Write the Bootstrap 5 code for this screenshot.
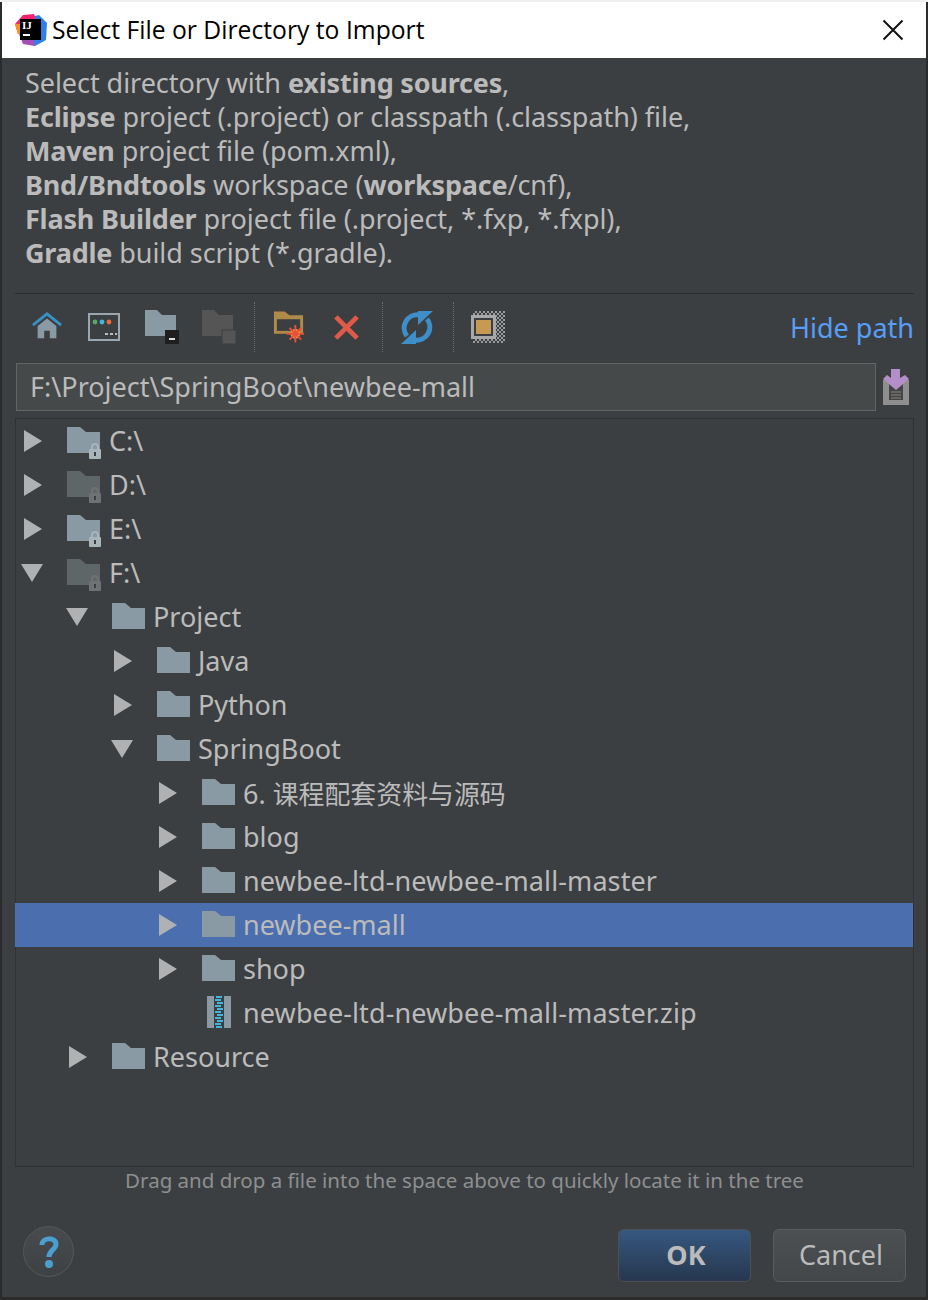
<!DOCTYPE html>
<html lang="en">
<head>
  <meta charset="UTF-8">
  <title>Select File or Directory to Import</title>
  <link href="https://cdn.jsdelivr.net/npm/bootstrap@5.3.0/dist/css/bootstrap.min.css" rel="stylesheet">
  <style>
    html, body { height: 1300px; overflow: hidden; }
    body { background: #f0f0f0; font-family: "Noto Sans", "Noto Sans CJK SC", sans-serif; color: #bbb; padding-top: 2px; }
    .dlg { height: 1298px; border-left: 2px solid #2b2b2b; border-right: 2px solid #2b2b2b; background: #3c3f41; }
    .title-bar { height: 56px; background: #fff; color: #000; font-family: "Open Sans", sans-serif; font-size: 24.7px; padding-left: 13px; flex: none; }
    .title-bar .logo { margin-right: 5px; }
    .title-bar .x-btn { margin-left: auto; margin-right: 22px; }
    .dlg-body { flex: 1; padding: 8px 12px 0 13px; border-bottom: 3px solid #2b2b2b; }
    .descr { font-size: 27px; line-height: 34px; padding-left: 10px; height: 227px; margin: 0; color: #bbb; letter-spacing: -.05px; }
    .descr b { font-weight: 700; letter-spacing: -.2px; }
    .tools { height: 70px; border-top: 1px solid #2b2b2b; padding: 0 0 3px 17px; }
    .tool-sep { width: 0; height: 50px; border-left: 1px dotted #6a6d6f; margin-right: 18px; }
    .g17 { margin-right: 17px; } .g18 { margin-right: 18px; } .g20 { margin-right: 20px; } .g22 { margin-right: 22px; }
    .g23 { margin-right: 23px; } .g25 { margin-right: 25px; } .g26 { margin-right: 26px; } .g27 { margin-right: 27px; }
    .tool-sep.g17 { margin-right: 17px; }
    .hide-link { margin-left: auto; margin-top: 3px; font-size: 27px; color: #589df6; text-decoration: none; }
    .path-row { height: 48px; margin-bottom: 7px; }
    .path-box { width: 860px; margin-left: 1px; height: 48px; background: #45494a; border: 1px solid #646464; font-size: 27px; line-height: 46px; padding-left: 13px; }
    .import-ic { margin: 6px 0 0 7px; }
    .tree-box { height: 749px; border: 1px solid #323232; }
    .tree-row { height: 44px; font-size: 27px; line-height: 44px; white-space: nowrap; }
    .tree-row.sel { background: #4b6eaf; margin-left: -1px; padding-left: 143px; }
    .tree-row.long { letter-spacing: .1px; }
    .d0 { padding-left: 7px; } .d1 { padding-left: 52px; } .d2 { padding-left: 97px; } .d3 { padding-left: 142px; }
    .tw { width: 36px; flex: none; }
    .fld { width: 41px; flex: none; margin: -2px 0 0 8px; }
    .d0 .fld { width: 41px; margin-right: 1px; }
    .cjk { font-family: "Noto Sans CJK SC", sans-serif; font-size: 25.9px; margin-top: 1px; }
    .hint { text-align: center; font-size: 20.5px; color: #8d8f90; height: 62px; line-height: 26px; }
    .foot { padding: 0 8px; }
    .help-btn { width: 51px; height: 51px; margin-top: -3px; border-radius: 50%; border: 1px solid #55585a; background: linear-gradient(#474b4d, #3e4244); }
    .act-btn { width: 133px; height: 53px; border-radius: 6px; font-size: 27px; padding: 0 0 2px 3px; line-height: 47px; border: 1px solid #5a5d5f; background: linear-gradient(#4c5052, #43474a); color: #bbb; }
    .act-btn.pri { background: linear-gradient(#365880, #26374e); font-weight: 700; border-color: #4c5052; margin-right: 22px; color: #bbb; }
  </style>
</head>
<body>
  <svg width="0" height="0" class="position-absolute">
    <symbol id="arr-r" viewBox="0 0 20 22"><path d="M1 0 19 11 1 22z" fill="#afb1b3"/></symbol>
    <symbol id="arr-d" viewBox="0 0 22 20"><path d="M0 1h22L11 19z" fill="#afb1b3"/></symbol>
    <symbol id="folder" viewBox="0 0 33 26"><path d="M0 0h13l6 5h14v21H0z" fill="currentColor"/></symbol>
    <symbol id="lock" viewBox="0 0 12 16"><path d="M3 7V4a3 3 0 0 1 6 0v3" fill="none" stroke="currentColor" stroke-width="2"/><rect x="0" y="6" width="12" height="10" rx="1" fill="currentColor"/><rect x="5" y="9" width="2" height="4" fill="#3c3f41"/></symbol>
  </svg>
  <div class="dlg d-flex flex-column">
    <div class="title-bar d-flex align-items-center">
      <svg class="logo" width="32" height="32" viewBox="0 0 32 32">
        <path d="M12 4 24 1 32 9 31 26 20 32 8 28z" fill="#2f7fe6"/>
        <path d="M0 10 8 1 19 0 22 8 8 20 3 20z" fill="#f0246f"/>
        <path d="M0 10 3 20 8 22 8 10z" fill="#f7941d"/>
        <path d="M4 20 8 30 20 32 18 24z" fill="#a64db6"/>
        <rect x="5" y="5" width="21" height="21" fill="#000"/>
        <text x="7" y="15" font-size="11" font-weight="700" fill="#fff" font-family="Liberation Serif">IJ</text>
        <rect x="8" y="20" width="7" height="2" fill="#fff"/>
      </svg>
      <span>Select File or Directory to Import</span>
      <svg class="x-btn" width="22" height="22" viewBox="0 0 22 22"><path d="M1.5 1.5 20.5 20.5M20.5 1.5 1.5 20.5" stroke="#111" stroke-width="2"/></svg>
    </div>
    <div class="dlg-body d-flex flex-column">
      <p class="descr">Select directory with <b>existing sources</b>,<br><b>Eclipse</b> project (.project) or classpath (.classpath) file,<br><b>Maven</b> project file (pom.xml),<br><b>Bnd/Bndtools</b> workspace (<b>workspace</b>/cnf),<br><b>Flash Builder</b> project file (.project, *.fxp, *.fxpl),<br><b>Gradle</b> build script (*.gradle).</p>
      <div class="tools d-flex align-items-center">
        <svg class="g26" width="30" height="30" viewBox="0 0 32 32"><path d="M1 14 16 2 31 14" fill="none" stroke="#3592c4" stroke-width="3"/><path d="M6 15 16 7 26 15V28H19V20H13V28H6z" fill="#8a9aa5"/></svg>
        <svg class="g25" width="32" height="28" viewBox="0 0 32 28"><rect x="1" y="1" width="30" height="26" fill="#3c3f41" stroke="#9aa7b0" stroke-width="2"/><circle cx="7" cy="9" r="2.4" fill="#59a869"/><circle cx="14" cy="9" r="2.4" fill="#40b6e0"/><circle cx="21" cy="9" r="2.4" fill="#ed6a3a"/><path d="M17 21h3m2 0h3m2 0h2" stroke="#bbb" stroke-width="2"/></svg>
        <svg class="g23" width="34" height="34" viewBox="0 0 34 34"><path d="M0 0h12l5 5h14v21H0z" fill="#8a9aa5"/><rect x="20" y="20" width="14" height="14" fill="#1f1f1f"/><rect x="24" y="28" width="6" height="2" fill="#ddd"/></svg>
        <svg class="g18" width="34" height="34" viewBox="0 0 34 34"><path d="M0 0h12l5 5h14v21H0z" fill="#555"/><rect x="20" y="20" width="14" height="14" fill="#555" stroke="#3c3f41" stroke-width="1"/></svg>
        <div class="tool-sep"></div>
        <svg class="g27" width="33" height="34" viewBox="0 0 34 34"><path d="M1 1h11l5 4h14v19H1z" fill="#b08a48"/><path d="M4 9h24v12H4z" fill="#3c3f41"/><circle cx="23" cy="24" r="5" fill="#f2a14a"/><path d="M23 15v18M14 24h18M17 18l12 12M29 18 17 30" stroke="#e8503a" stroke-width="2"/></svg>
        <svg class="g22" width="27" height="27" viewBox="0 0 28 28"><path d="M3 3 25 25M25 3 3 25" stroke="#e05a4a" stroke-width="5"/></svg>
        <div class="tool-sep"></div>
        <svg class="g20" width="32" height="33" viewBox="0 0 32 33">
          <path d="M18 4A13 13 0 0 0 6 25M14 29A13 13 0 0 0 26 8" fill="none" stroke="#3d8ec9" stroke-width="5"/>
          <path d="M0 33H15V19z" fill="#3d8ec9"/><path d="M32 0H17V14z" fill="#3d8ec9"/>
        </svg>
        <div class="tool-sep g17"></div>
        <svg width="34" height="32" viewBox="0 0 34 32"><defs><pattern id="chk" width="4" height="4" patternUnits="userSpaceOnUse"><rect width="2" height="2" fill="#9a9a9a"/><rect x="2" y="2" width="2" height="2" fill="#9a9a9a"/></pattern></defs><rect x="2" y="0" width="32" height="32" fill="url(#chk)"/><rect x="1.5" y="5.5" width="22" height="21" fill="#3c3f41" stroke="#a8a8a8" stroke-width="3"/><rect x="5" y="9" width="15" height="14" fill="#c69a55"/></svg>
        <a href="#" class="hide-link">Hide path</a>
      </div>
      <div class="path-row d-flex">
        <div class="path-box">F:\Project\SpringBoot\newbee-mall</div>
        <svg class="import-ic" width="26" height="36" viewBox="0 0 26 36"><path d="M0 11h26v25H0z" fill="#8f8f8f"/><rect x="6" y="14" width="14" height="17" fill="#444"/><path d="M8 23h10M8 26h10M8 29h10" stroke="#888"/><path d="M8 0h9v9l5-3 4 4-13 11L0 10l4-4 4 3z" fill="#b48ec8"/></svg>
      </div>
      <div class="tree-box" id="tree"></div>
      <div class="hint">Drag and drop a file into the space above to quickly locate it in the tree</div>
      <div class="foot d-flex align-items-start">
        <button class="help-btn d-flex align-items-center justify-content-center p-0">
          <svg width="20" height="32" viewBox="0 0 20 32"><path d="M3 9C3 1 17 1 17 8c0 6-7 6-7 13" fill="none" stroke="#4a9fd0" stroke-width="5"/><circle cx="10" cy="28" r="4" fill="#4a9fd0"/></svg>
        </button>
        <button class="act-btn pri ms-auto">OK</button>
        <button class="act-btn">Cancel</button>
      </div>
    </div>
  </div>
  <script>
    // depth, arrow (r/d/none), icon, label, row class
    const rows = [
      [0, "r", "lock", "C:\\"],
      [0, "r", "lock-dim", "D:\\"],
      [0, "r", "lock", "E:\\"],
      [0, "d", "lock-dim", "F:\\"],
      [1, "d", "folder", "Project"],
      [2, "r", "folder", "Java"],
      [2, "r", "folder", "Python"],
      [2, "d", "folder", "SpringBoot"],
      [3, "r", "folder", '6. <span class="cjk">课程配套资料与源码</span>'],
      [3, "r", "folder", "blog"],
      [3, "r", "folder", "newbee-ltd-newbee-mall-master", "long"],
      [3, "r", "folder", "newbee-mall", "sel"],
      [3, "r", "folder", "shop"],
      [3, "", "zip", "newbee-ltd-newbee-mall-master.zip", "long"],
      [1, "r", "folder", "Resource"]
    ];

    function iconFor(kind) {
      if (kind === "zip") {
        return `<svg width="24" height="32" viewBox="0 0 24 32" style="margin-left:5px"><rect width="24" height="32" fill="#8a9aa5"/><rect x="7" width="10" height="32" fill="#3c3f41"/><path d="M9 1h6M8 4h6M10 7h6M8 10h6M10 13h6M8 16h6M10 19h6M8 22h6M10 25h6M8 28h6M9 31h6" stroke="#40b6e0" stroke-width="2"/></svg>`;
      }
      const dim = kind === "lock-dim";
      const c = dim ? "#5f6668" : "#8a9aa5";
      const lock = kind === "folder" ? "" :
        `<svg class="position-absolute" style="left:22px;top:16px;color:${dim ? "#6e7274" : "#a9b4bb"}" width="12" height="16"><use href="#lock"/></svg>`;
      return `<span class="position-relative d-block" style="width:33px;height:26px;color:${c}"><svg class="d-block" width="33" height="26"><use href="#folder"/></svg>${lock}</span>`;
    }

    document.getElementById("tree").innerHTML = rows.map(r => {
      const arrow = r[1] === "r" ? `<svg width="20" height="22"><use href="#arr-r"/></svg>`
        : r[1] === "d" ? `<svg width="22" height="20" style="margin-left:-2px"><use href="#arr-d"/></svg>` : "";
      return `<div class="tree-row d-flex align-items-center d${r[0]} ${r[4] || ""}">
        <span class="tw d-flex align-items-center">${arrow}</span>
        <span class="fld d-flex align-items-center">${iconFor(r[2])}</span>
        <span>${r[3]}</span>
      </div>`;
    }).join("");
  </script>
  <script src="https://cdn.jsdelivr.net/npm/bootstrap@5.3.0/dist/js/bootstrap.bundle.min.js"></script>
</body>
</html>
